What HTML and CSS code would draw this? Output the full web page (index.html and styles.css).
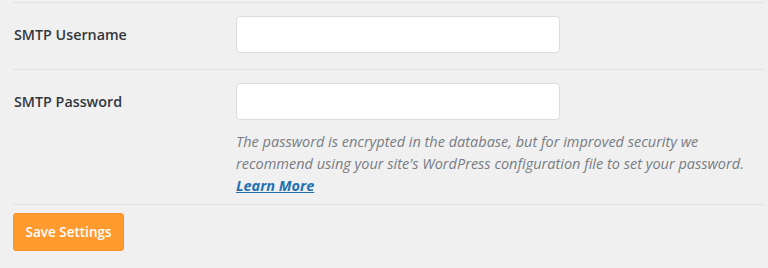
FILE: index.html
```html
<!DOCTYPE html>
<html>
<head>
<meta charset="utf-8">
<link rel="stylesheet" href="styles.css">
</head>
<body>
<div class="settings">
  <div class="row">
    <div class="label">SMTP Username</div>
    <div class="field"><input class="text" type="text"></div>
  </div>
  <div class="row row-pass">
    <div class="label">SMTP Password</div>
    <div class="field">
      <input class="text" type="password">
      <p class="desc">The password is encrypted in the database, but for improved security we recommend using your site's WordPress configuration file to set your password. <a href="#">Learn More</a></p>
    </div>
  </div>
  <div class="actions">
    <button class="save" type="button">Save Settings</button>
  </div>
</div>
</body>
</html>
```
FILE: styles.css
```css
html, body {
  margin: 0;
  padding: 0;
  background: #f0f0f1;
}
body {
  font-family: "Open Sans", "Noto Sans", sans-serif;
  color: #3c434a;
}
.settings {
  width: 751px;
  margin: 2px 0 0 13px;
  border-top: 1px solid #e2e2e3;
}
.row {
  display: grid;
  grid-template-columns: 223px 1fr;
  padding: 13px 0 16px;
  border-bottom: 1px solid #e2e2e3;
}
.row-pass {
  padding-bottom: 7px;
}
.label {
  font-size: 14.3px;
  font-weight: 600;
  line-height: 37px;
  padding-left: 1px;
  color: #32373c;
}
.text {
  display: block;
  box-sizing: border-box;
  width: 324px;
  height: 37px;
  margin: 0;
  background: #fff;
  border: 1px solid #dcdcde;
  border-radius: 4px;
}
.desc {
  margin: 11px 0 0;
  font-size: 14.5px;
  line-height: 22px;
  font-style: italic;
  color: #787c82;
  width: 522px;
}
.desc a {
  color: #2271b1;
  font-weight: 700;
  text-decoration: underline;
}
.actions {
  padding-top: 8px;
}
.save {
  display: block;
  width: 111px;
  height: 38px;
  margin: 0;
  padding: 0;
  border: 1px solid #f7922a;
  border-radius: 3px;
  background: #ff9a2e;
  color: #fff;
  font-family: "Open Sans", "Noto Sans", sans-serif;
  font-size: 13.5px;
  font-weight: 600;
}
```
